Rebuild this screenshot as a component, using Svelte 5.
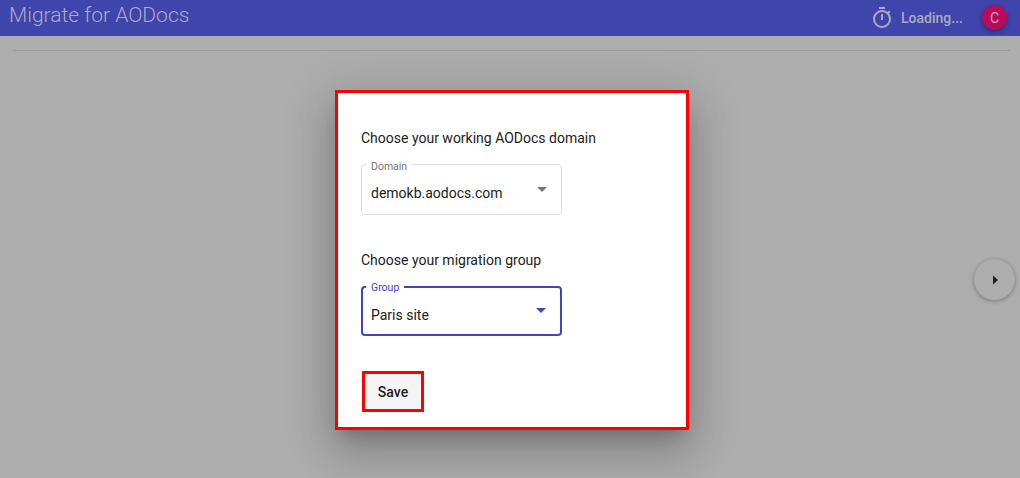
<script lang="ts">
  const fields = [
    { prompt: "Choose your working AODocs domain", label: "Domain", value: "demokb.aodocs.com", focused: false },
    { prompt: "Choose your migration group", label: "Group", value: "Paris site", focused: true },
  ];
</script>

<div class="page">
  <header>
    <span class="title">Migrate for AODocs</span>
    <div class="status">
      <svg width="24" height="24" viewBox="0 0 24 24" aria-hidden="true">
        <path
          fill="currentColor"
          d="M15 1H9v2h6V1zm-4 13h2V8h-2v6zm8.03-6.61 1.42-1.42c-.43-.51-.9-.99-1.41-1.41l-1.42 1.42A8.96 8.96 0 0 0 12 4a9 9 0 1 0 9 9c0-2.12-.74-4.07-1.97-5.61zM12 20a7 7 0 1 1 0-14 7 7 0 0 1 0 14z"
        />
      </svg>
      <span class="loading">Loading...</span>
      <span class="avatar">C</span>
    </div>
  </header>

  <main>
    <hr />
    <button class="next" aria-label="Next">
      <svg width="24" height="24" viewBox="0 0 24 24"><path fill="#1c1c1c" d="M10 7.5v9l5-4.5z" /></svg>
    </button>
  </main>

  <div class="scrim">
    <div class="dialog">
      {#each fields as field}
        <p>{field.prompt}</p>
        <div class="select" class:focused={field.focused}>
          <span class="label">{field.label}</span>
          <span class="value">{field.value}</span>
          <span class="arrow"></span>
        </div>
      {/each}
      <button class="save">Save</button>
    </div>
  </div>
</div>

<style>
  :global(body) {
    font-family: Roboto, "Liberation Sans", sans-serif;
  }

  .page {
    position: relative;
    height: 478px;
    overflow: hidden;
    display: flex;
    flex-direction: column;
    background: #adadad;
  }

  header {
    height: 36px;
    flex: none;
    display: flex;
    align-items: center;
    justify-content: space-between;
    padding: 0 13px 0 9px;
    background: #3f45ab;
    color: #ababc4;
  }

  .title {
    font-size: 21px;
    font-weight: 300;
    line-height: 30px;
    margin-bottom: 6px;
  }

  .status {
    display: flex;
    align-items: center;
  }

  .status svg {
    width: 24px;
    height: 24px;
    margin-right: 7px;
  }

  .loading {
    font-size: 14px;
    font-weight: 500;
    width: 69px;
    margin-top: -1px;
  }

  .avatar {
    width: 25px;
    height: 25px;
    margin-left: 12px;
    margin-top: -1px;
    border-radius: 50%;
    display: flex;
    align-items: center;
    justify-content: center;
    background: #b80b5a;
    color: #d9a0bb;
    font-size: 14px;
    box-shadow: 0 2px 5px rgba(0, 0, 0, 0.3);
  }

  main {
    flex: 1;
    display: flex;
    flex-direction: column;
    padding: 14px 10px 0 13px;
  }

  hr {
    width: 100%;
    margin: 0;
    border: 0;
    border-top: 1px solid #9b9b9b;
  }

  .next {
    align-self: flex-end;
    width: 41px;
    height: 41px;
    margin: 208px -5px 0 0;
    padding: 0;
    border: 0;
    border-radius: 50%;
    display: flex;
    align-items: center;
    justify-content: center;
    background: #adadad;
    box-shadow: 0 1px 4px rgba(0, 0, 0, 0.32);
  }

  .scrim {
    position: absolute;
    inset: 0;
  }

  .dialog {
    box-sizing: border-box;
    width: 354px;
    height: 340px;
    margin: 90px 0 0 335px;
    padding: 37px 23px 0;
    border: 3px solid #f00;
    background: #fff;
    box-shadow: 0 11px 15px -7px rgba(0, 0, 0, 0.2), 0 24px 38px 3px rgba(0, 0, 0, 0.14), 0 9px 46px 8px rgba(0, 0, 0, 0.12);
  }

  p {
    margin: 0 0 18px;
    font-size: 14px;
    line-height: 16px;
    color: #212121;
  }

  .select {
    position: relative;
    box-sizing: border-box;
    width: 201px;
    height: 51px;
    margin-bottom: 37px;
    padding: 20px 0 0 9px;
    border: 1px solid #dedede;
    border-radius: 4px;
    display: flex;
    justify-content: space-between;
  }

  .select.focused {
    height: 50px;
    padding: 19px 0 0 8px;
    border: 2px solid #3f46b8;
    margin-bottom: 35px;
  }

  .label {
    position: absolute;
    top: -4px;
    left: 4px;
    padding: 0 5px;
    background: #fff;
    font-size: 10.5px;
    line-height: 12px;
    color: #757575;
  }

  .focused .label {
    top: -6px;
    left: 3px;
    color: #3f46b8;
  }

  .value {
    font-size: 14px;
    line-height: 16px;
    color: #212121;
  }

  .arrow {
    width: 0;
    height: 0;
    margin: 2px 14px 0 0;
    border-left: 5.5px solid transparent;
    border-right: 5.5px solid transparent;
    border-top: 5.5px solid #757575;
  }

  .focused .arrow {
    margin-top: 1px;
    border-top-color: #3f46b8;
  }

  .save {
    display: block;
    box-sizing: border-box;
    width: 62px;
    height: 41px;
    margin-left: 1px;
    padding: 1px 0 0;
    border: 3px solid #f00;
    background: #f5f5f5;
    color: #212121;
    font: 500 14px Roboto, sans-serif;
  }
</style>
